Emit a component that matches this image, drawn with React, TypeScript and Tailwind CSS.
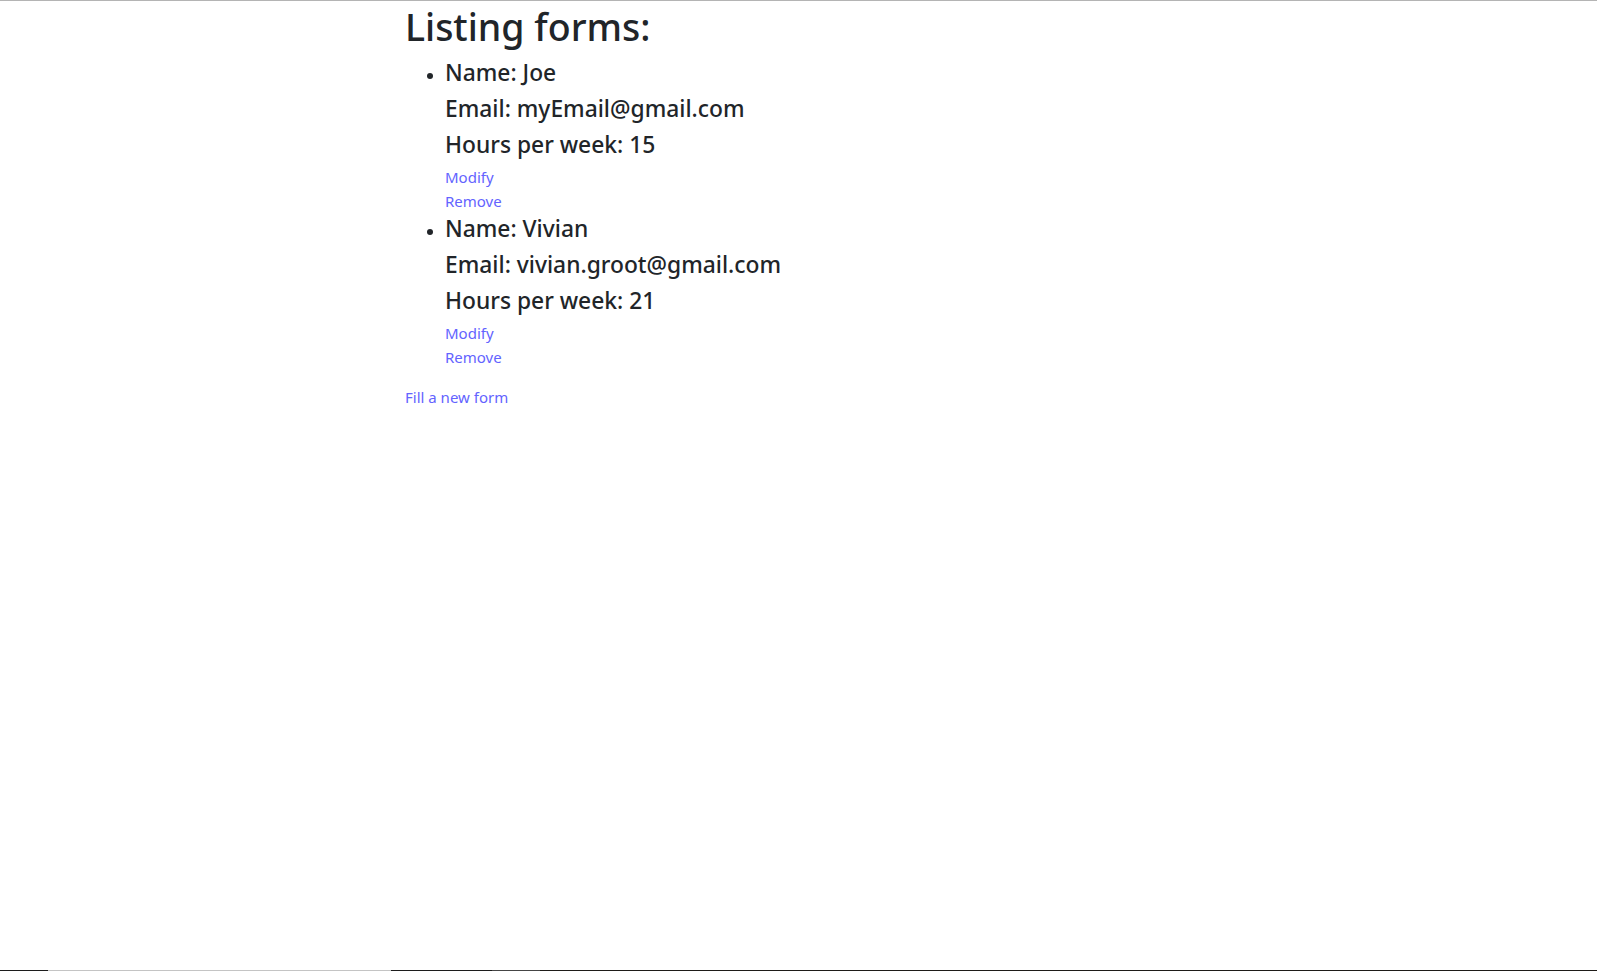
import React from "react";

const forms = [
  { name: "Joe", email: "myEmail@gmail.com", hours: 15 },
  { name: "Vivian", email: "vivian.groot@gmail.com", hours: 21 },
];

export default function App() {
  return (
    <div
      className="h-screen flex flex-col bg-white border-t border-[#b4b4b4] text-[#212529]"
      style={{ fontFamily: '"Noto Sans", "Open Sans", sans-serif' }}
    >
      <div className="flex-1 pl-[405px]">
        <h1 className="text-[37.5px] font-medium leading-[48px] pt-[2px] mb-[6px]">Listing forms:</h1>
        <ul className="list-disc pl-[40px] mb-4">
          {forms.map((f) => (
            <li key={f.name}>
              <h4 className="text-[22.8px] font-medium leading-[28px] pt-[2px] mb-[6px]">Name: {f.name}</h4>
              <h4 className="text-[22.8px] font-medium leading-[28px] pt-[2px] mb-[6px]">Email: {f.email}</h4>
              <h4 className="text-[22.8px] font-medium leading-[28px] pt-[2px] mb-[6px]">Hours per week: {f.hours}</h4>
              <a href="#" className="block text-[15px] leading-6 text-[#6363ff]">Modify</a>
              <a href="#" className="block text-[15px] leading-6 text-[#6363ff]">Remove</a>
            </li>
          ))}
        </ul>
        <a href="#" className="text-[15px] leading-6 text-[#6363ff]">Fill a new form</a>
      </div>
      <div className="h-px flex">
        <div className="w-[48px] bg-[#1c1c1c]" />
        <div className="w-[343px] bg-[#c4c4c4]" />
        <div className="w-[101px] bg-[#1c1c1c]" />
        <div className="w-[48px] bg-[#454545]" />
        <div className="flex-1 bg-[#1e1b18]" />
      </div>
    </div>
  );
}
